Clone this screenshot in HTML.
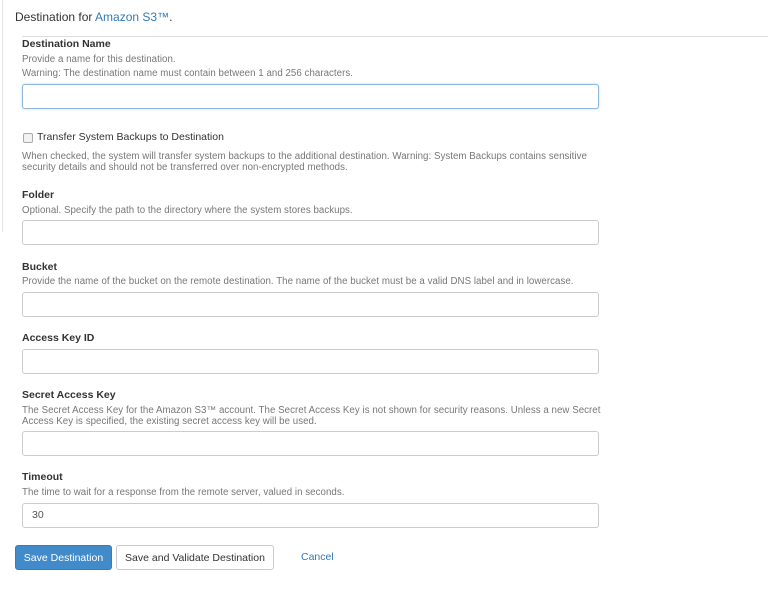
<!DOCTYPE html>
<html><head><meta charset="utf-8"><style>
body{margin:0;width:768px;height:591px;background:#fff;position:relative;overflow:hidden;font-family:"Liberation Sans",sans-serif}
.a{position:absolute;white-space:nowrap;line-height:12px}
.t{font-size:12px;color:#333;line-height:16px}
.l{font-size:10.5px;font-weight:bold;color:#333}
.d{font-size:9.7px;color:#777;letter-spacing:0.05px}
.in{position:absolute;left:22px;width:575px;height:23px;border:1px solid #ccc;border-radius:3px;background:#fff}
.btn{position:absolute;top:545px;height:25px;border-radius:3px;font-size:10.5px;line-height:25px;text-align:center;box-sizing:border-box}
</style></head><body>
<div style="position:absolute;left:2px;top:0;width:1px;height:232px;background:#e6e6e6"></div>
<div class="a t" style="left:15px;top:9px">Destination for <span style="color:#337ab7">Amazon S3™</span>.</div>
<div style="position:absolute;left:22px;top:36px;width:746px;height:1px;background:#ddd"></div>

<div class="a l" style="left:22px;top:38px">Destination Name</div>
<div class="a d" style="left:22px;top:54px">Provide a name for this destination.</div>
<div class="a d" style="left:22px;top:68px">Warning: The destination name must contain between 1 and 256 characters.</div>
<div class="in" style="top:84px;border-color:#8fb8dd;box-shadow:0 0 2px rgba(102,175,233,.5)"></div>

<div style="position:absolute;left:23px;top:133px;width:8px;height:8px;border:1px solid #aaa;border-radius:2px;background:#f2f2f2"></div>
<div class="a" style="left:37px;top:131px;font-size:10.5px;color:#333">Transfer System Backups to Destination</div>
<div class="a d" style="left:22px;top:151px">When checked, the system will transfer system backups to the additional destination. Warning: System Backups contains sensitive</div>
<div class="a d" style="left:22px;top:162px">security details and should not be transferred over non-encrypted methods.</div>

<div class="a l" style="left:22px;top:189px">Folder</div>
<div class="a d" style="left:22px;top:205px">Optional. Specify the path to the directory where the system stores backups.</div>
<div class="in" style="top:220px"></div>

<div class="a l" style="left:22px;top:261px">Bucket</div>
<div class="a d" style="left:22px;top:276px">Provide the name of the bucket on the remote destination. The name of the bucket must be a valid DNS label and in lowercase.</div>
<div class="in" style="top:292px"></div>

<div class="a l" style="left:22px;top:332px">Access Key ID</div>
<div class="in" style="top:349px"></div>

<div class="a l" style="left:22px;top:389px">Secret Access Key</div>
<div class="a d" style="left:22px;top:405px">The Secret Access Key for the Amazon S3™ account. The Secret Access Key is not shown for security reasons. Unless a new Secret</div>
<div class="a d" style="left:22px;top:416px">Access Key is specified, the existing secret access key will be used.</div>
<div class="in" style="top:431px"></div>

<div class="a l" style="left:22px;top:471px">Timeout</div>
<div class="a d" style="left:22px;top:487px">The time to wait for a response from the remote server, valued in seconds.</div>
<div class="in" style="top:503px"></div>
<div class="a" style="left:32px;top:509px;font-size:10.5px;color:#555">30</div>

<div class="btn" style="left:15px;width:97px;background:#428bca;border:1px solid #357ebd;color:#fff">Save Destination</div>
<div class="btn" style="left:116px;width:158px;background:#fff;border:1px solid #ccc;color:#333">Save and Validate Destination</div>
<div class="a" style="left:301px;top:551px;font-size:10.5px;color:#337ab7">Cancel</div>
</body></html>
